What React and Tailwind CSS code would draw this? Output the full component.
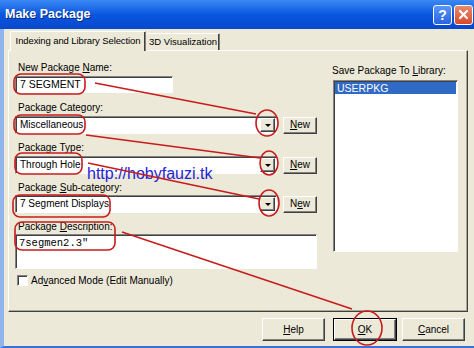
import React from 'react'

const raised =
  'border border-t-white border-l-white border-r-[#404040] border-b-[#404040] shadow-[inset_-1px_-1px_0_#808080] bg-[#ece9d8]'
const sunken =
  'border border-t-[#848284] border-l-[#848284] border-r-white border-b-white shadow-[inset_1px_1px_0_#404040] bg-white'

const Label = ({ children, className = '' }) => (
  <div className={`ml-[3px] h-[13px] leading-[13px] ${className}`}>{children}</div>
)

const Arrow = () => (
  <div className="h-0 w-0 border-l-[3px] border-r-[3px] border-t-[3px] border-l-transparent border-r-transparent border-t-black" />
)

const NewButton = ({ u = 0 }) => (
  <div className={`${raised} ml-[6px] flex h-[17px] w-[34px] items-center justify-center leading-none`}>
    {u === 0 ? (
      <span><u>N</u>ew</span>
    ) : (
      <span>N<u>e</u>w</span>
    )}
  </div>
)

const Combo = ({ text, u }) => (
  <div className="flex items-center">
    <div className={`${sunken} flex h-[18px] w-[262px]`}>
      <div className="flex-1 pl-[4px] leading-[16px]">{text}</div>
      <div className={`${raised} m-[1px] flex w-[15px] items-center justify-center`}>
        <Arrow />
      </div>
    </div>
    <NewButton u={u} />
  </div>
)

const DlgButton = ({ children, def }) =>
  def ? (
    <div className="h-[23px] w-[64px] border border-black">
      <div className={`${raised} flex h-full w-full items-center justify-center`}>{children}</div>
    </div>
  ) : (
    <div className={`${raised} flex h-[23px] w-[63px] items-center justify-center`}>{children}</div>
  )

const Marks = () => (
  <svg className="pointer-events-none absolute left-0 top-0" width="474" height="348" fill="none" stroke="#c81c1c" strokeWidth="1.6">
    <rect x="14" y="74" width="71" height="20" rx="7" />
    <rect x="14" y="115" width="71" height="19" rx="7" />
    <rect x="15" y="153" width="67" height="21" rx="7" />
    <rect x="13" y="195" width="97" height="22" rx="7" />
    <rect x="15" y="222" width="100" height="28" rx="7" />
    <ellipse cx="267" cy="123" rx="11" ry="13" />
    <ellipse cx="269" cy="163" rx="9" ry="12" />
    <ellipse cx="269" cy="203" rx="10" ry="13" />
    <ellipse cx="367" cy="328" rx="15" ry="17" />
    <line x1="95" y1="83" x2="256" y2="114" />
    <line x1="86" y1="135" x2="260" y2="158" />
    <line x1="88" y1="163" x2="259" y2="199" />
    <line x1="122" y1="232" x2="352" y2="309" />
  </svg>
)

export default function App() {
  return (
    <div className="relative flex h-[348px] w-[474px] flex-col overflow-hidden bg-[#ece9d8] font-['Liberation_Sans',Arial,sans-serif] text-[10px] text-black">
      {/* title bar */}
      <div className="flex h-[29px] items-center bg-gradient-to-b from-[#3a88f2] via-[#0a56e0] to-[#0848cc] pl-[5px] pr-[1px]">
        <div className="flex-1 text-[12.5px] font-bold text-white [text-shadow:1px_1px_0_#0a2a80]">Make Package</div>
        <div className="flex h-[20px] w-[19px] items-center justify-center rounded-[3px] border border-white bg-gradient-to-b from-[#5a96f8] to-[#2a62e0] text-[14px] font-bold leading-none text-white">?</div>
        <div className="ml-[2px] flex h-[20px] w-[19px] items-center justify-center rounded-[3px] border border-white bg-gradient-to-b from-[#e88a6a] to-[#d8482a]">
          <svg width="11" height="11" viewBox="0 0 11 11" stroke="white" strokeWidth="2.2" strokeLinecap="round">
            <path d="M2 2 L9 9 M9 2 L2 9" />
          </svg>
        </div>
      </div>

      <div className="flex flex-1 flex-col border-b-[2px] border-l-[4px] border-b-[#3d6fd6] border-l-[#8fb5ec] pl-[4px] pr-[6px] pt-[2px]">
        {/* tabs */}
        <div className="relative z-10 flex h-[19px] items-end pl-[2px]">
          <div className="-mb-[1px] flex h-[20px] w-[136px] items-center justify-center whitespace-nowrap border-l border-r border-t border-l-white border-r-[#808080] border-t-white bg-[#ece9d8] text-[9.5px] tracking-[-0.1px] shadow-[inset_-1px_0_0_#404040]">
            Indexing and Library Selection
          </div>
          <div className="ml-[1px] flex h-[17px] w-[73px] items-center justify-center whitespace-nowrap border-r border-t border-r-[#808080] border-t-white text-[9.5px] shadow-[inset_-1px_0_0_#404040]">
            3D Visualization
          </div>
        </div>

        {/* panel */}
        <div className="flex h-[262px] border border-b-[#404040] border-l-white border-r-[#404040] border-t-white pl-[6px] pt-[10px] shadow-[inset_-1px_-1px_0_#aca899]">
          <div className="flex w-[302px] flex-col">
            <Label>New Package <u>N</u>ame:</Label>
            <div className={`${sunken} mt-[2px] h-[17px] w-[158px] pl-[4px] text-[10.5px] leading-[15px]`}>7 SEGMENT</div>

            <Label className="mt-[8px]">Package Category:</Label>
            <div className="mt-[2px]"><Combo text="Miscellaneous" u={0} /></div>

            <Label className="mt-[7px]">Package Type:</Label>
            <div className="mt-[2px]"><Combo text="Through Hole" u={0} /></div>

            <Label className="mt-[7px]">Package <u>S</u>ub-category:</Label>
            <div className="mt-[1px]"><Combo text="7 Segment Displays" u={1} /></div>

            <Label className="mt-[7px]">Package <u>D</u>escription:</Label>
            <div className={`${sunken} mt-[1px] h-[35px] w-[302px] pl-[3px] pt-[2px] font-['Liberation_Mono',monospace] text-[10.5px] leading-[13px]`}>
              7segmen2.3"
            </div>

            <div className="ml-[2px] mt-[4px] flex items-center">
              <div className={`${sunken} h-[11px] w-[11px]`} />
              <div className="ml-[3px]">Ad<u>v</u>anced Mode (Edit Manually)</div>
            </div>
          </div>

          <div className="ml-[15px] flex w-[127px] flex-col pt-[3px]">
            <div className="h-[13px] leading-[13px]">Save Package To <u>L</u>ibrary:</div>
            <div className={`${sunken} ml-[1px] mt-[3px] h-[172px] w-[125px] p-[1px]`}>
              <div className="h-[12px] bg-[#316ac5] pl-[2px] text-[10.5px] leading-[12px] text-white">USERPKG</div>
            </div>
          </div>
        </div>

        {/* buttons */}
        <div className="mt-[6px] flex justify-end pr-[3px]">
          <DlgButton><span><u>H</u>elp</span></DlgButton>
          <div className="ml-[8px]"><DlgButton def><span><u>O</u>K</span></DlgButton></div>
          <div className="ml-[5px]"><DlgButton><span><u>C</u>ancel</span></DlgButton></div>
        </div>
      </div>

      <div className="pointer-events-none absolute left-[87px] top-[166px] text-[16px] leading-none text-[#2424d8]">http://hobyfauzi.tk</div>
      <Marks />
    </div>
  )
}
